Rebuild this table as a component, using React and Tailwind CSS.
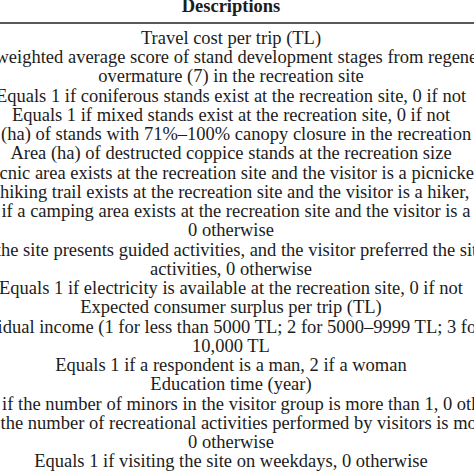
const lines = [
    'Travel cost per trip (TL)',
    'Refers to the weighted average score of stand development stages from regeneration (1) to',
    'overmature (7) in the recreation site',
    'Equals 1 if coniferous stands exist at the recreation site, 0 if not',
    'Equals 1 if mixed stands exist at the recreation site, 0 if not',
    'Area (ha) of stands with 71%–100% canopy closure in the recreation site',
    'Area (ha) of destructed coppice stands at the recreation size',
    'Equals 1 if a picnic area exists at the recreation site and the visitor is a picnicker, 0 otherwise',
    'Equals 1 if a hiking trail exists at the recreation site and the visitor is a hiker, 0 otherwise',
    'Equals 1 if a camping area exists at the recreation site and the visitor is a camper',
    '0 otherwise',
    "Equals 1 if the site presents guided activities, and the visitor preferred the site's guided",
    'activities, 0 otherwise',
    'Equals 1 if electricity is available at the recreation site, 0 if not',
    'Expected consumer surplus per trip (TL)',
    'Annual individual income (1 for less than 5000 TL; 2 for 5000–9999 TL; 3 for more than',
    '10,000 TL',
    'Equals 1 if a respondent is a man, 2 if a woman',
    'Education time (year)',
    'Equals 1 if the number of minors in the visitor group is more than 1, 0 otherwise',
    'Equals 1 if the number of recreational activities performed by visitors is more than 1,',
    '0 otherwise',
    'Equals 1 if visiting the site on weekdays, 0 otherwise',
];

export default function App() {
    return (
        <div className="w-[474px] h-[474px] overflow-hidden bg-white text-[#1c1c1c] font-['Liberation_Serif',serif] text-[18.5px] leading-[19.25px]">
            <div className="w-[800px] ml-[-169px] flex flex-col">
                <div className="mt-[-3px] text-center font-bold">Descriptions</div>
                <div className="mt-[6px] h-[2px] bg-[#5a5a5a]" />
                <div className="pt-[4.6px] flex flex-col">
                    {lines.map((line, i) => (
                        <div key={i} className="text-center whitespace-nowrap">
                            {line}
                        </div>
                    ))}
                </div>
            </div>
        </div>
    );
}
